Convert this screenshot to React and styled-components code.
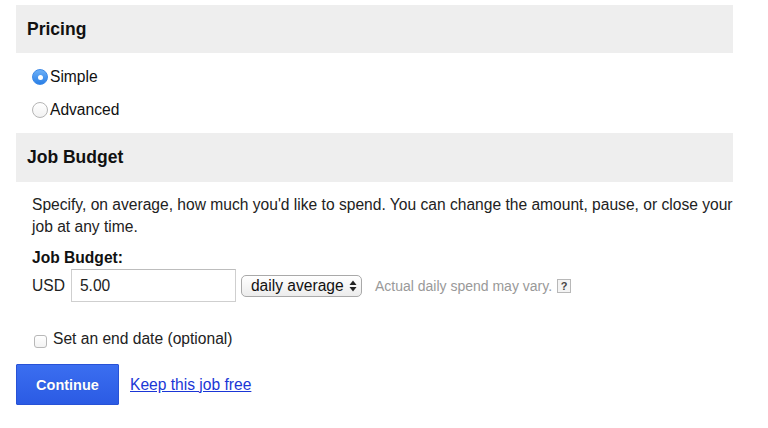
import React from "react";
import styled, { createGlobalStyle } from "styled-components";

const Global = createGlobalStyle`
  html, body { margin: 0; padding: 0; background: #fff; }
  body { font-family: "Liberation Sans", Arial, sans-serif; color: #222; }
`;

const Page = styled.div`
  width: 717px;
  margin-left: 16px;
  padding-top: 5px;
`;

const SectionHeader = styled.div`
  background: #eeeeee;
  height: ${(p) => p.h}px;
  display: flex;
  align-items: center;
  padding-left: 11px;
  font-size: 17.5px;
  font-weight: bold;
  color: #111;
`;

const RadioList = styled.div`
  display: flex;
  flex-direction: column;
  gap: 15px;
  padding: 15px 0 14px 16px;
`;

const RadioRow = styled.label`
  display: flex;
  align-items: center;
  height: 18px;
  font-size: 15.6px;
  color: #111;
`;

const RadioDot = styled.span`
  width: 16px;
  height: 16px;
  border-radius: 50%;
  box-sizing: border-box;
  margin-right: 2px;
  display: flex;
  align-items: center;
  justify-content: center;
  background: ${(p) => (p.on ? "linear-gradient(#6cb0f8, #2a7fe6)" : "linear-gradient(#fff, #f2f2f2)")};
  border: 1px solid ${(p) => (p.on ? "#3d8ae8" : "#b5b5b5")};
  &::after {
    content: "";
    display: ${(p) => (p.on ? "block" : "none")};
    width: 5px;
    height: 5px;
    border-radius: 50%;
    background: #fff;
  }
`;

const Body = styled.div`
  padding: 12px 0 0 16px;
`;

const Desc = styled.p`
  margin: 0;
  font-size: 15.6px;
  line-height: 22px;
  color: #222;
`;

const FieldLabel = styled.div`
  margin-top: 10px;
  font-size: 15.6px;
  font-weight: bold;
  color: #111;
  line-height: 20px;
`;

const BudgetRow = styled.div`
  display: flex;
  align-items: center;
  margin-top: 1px;
  height: 33px;
`;

const Currency = styled.span`
  font-size: 15.6px;
  color: #222;
  margin-right: 6px;
`;

const AmountInput = styled.div`
  width: 165px;
  height: 33px;
  box-sizing: border-box;
  border: 1px solid #cfcfcf;
  border-top-color: #bdbdbd;
  display: flex;
  align-items: center;
  padding-left: 8px;
  font-size: 15.6px;
  color: #222;
`;

const Select = styled.div`
  margin-left: 5px;
  width: 121px;
  height: 22px;
  box-sizing: border-box;
  border: 1px solid #a9a9a9;
  border-radius: 5px;
  background: linear-gradient(#ffffff, #ececec);
  display: flex;
  align-items: center;
  justify-content: space-between;
  padding: 0 4px 0 9px;
  font-size: 15.6px;
  color: #111;
`;

const Hint = styled.span`
  margin-left: 13px;
  font-size: 14px;
  color: #999;
`;

const HelpBox = styled.span`
  margin-left: 5px;
  width: 14px;
  height: 14px;
  box-sizing: border-box;
  border: 1px solid #b8b8b8;
  background: #f4f4f4;
  display: inline-flex;
  align-items: center;
  justify-content: center;
  font-size: 11px;
  font-weight: bold;
  color: #444;
`;

const CheckRow = styled.label`
  display: flex;
  align-items: center;
  margin-top: 28px;
  font-size: 15.6px;
  color: #222;
  padding-left: 2px;
`;

const CheckBox = styled.span`
  width: 13px;
  height: 13px;
  box-sizing: border-box;
  border: 1px solid #b8b8b8;
  border-radius: 3px;
  background: linear-gradient(#fff, #f3f3f3);
  margin-right: 6px;
  margin-top: 4px;
`;

const Actions = styled.div`
  display: flex;
  align-items: center;
  margin-top: 16px;
  gap: 11px;
`;

const ContinueButton = styled.button`
  width: 103px;
  height: 41px;
  border: 1px solid #2852d6;
  border-radius: 1px;
  background: linear-gradient(#3b6ef0, #2b5be4);
  color: #fff;
  font-family: "Liberation Sans", Arial, sans-serif;
  font-size: 14.5px;
  font-weight: bold;
  text-shadow: 0 0 1px rgba(0, 0, 0, 0.2);
  padding: 0;
`;

const Link = styled.a`
  font-size: 15.6px;
  color: #1a36d6;
  text-decoration: underline;
`;

function SortArrows() {
  return (
    <svg width="8" height="12" viewBox="0 0 8 12">
      <path d="M4 0.5 L7.5 5 L0.5 5 Z" fill="#222" />
      <path d="M4 11.5 L7.5 7 L0.5 7 Z" fill="#222" />
    </svg>
  );
}

export default function App() {
  return (
    <>
      <Global />
      <Page>
        <SectionHeader h={48}>Pricing</SectionHeader>
        <RadioList>
          <RadioRow>
            <RadioDot on />
            Simple
          </RadioRow>
          <RadioRow>
            <RadioDot />
            Advanced
          </RadioRow>
        </RadioList>
        <SectionHeader h={49}>Job Budget</SectionHeader>
        <Body>
          <Desc>
            Specify, on average, how much you'd like to spend. You can change the amount, pause, or close your
            job at any time.
          </Desc>
          <FieldLabel>Job Budget:</FieldLabel>
          <BudgetRow>
            <Currency>USD</Currency>
            <AmountInput>5.00</AmountInput>
            <Select>
              daily average
              <SortArrows />
            </Select>
            <Hint>Actual daily spend may vary.</Hint>
            <HelpBox>?</HelpBox>
          </BudgetRow>
          <CheckRow>
            <CheckBox />
            Set an end date (optional)
          </CheckRow>
        </Body>
        <Actions>
          <ContinueButton>Continue</ContinueButton>
          <Link href="#">Keep this job free</Link>
        </Actions>
      </Page>
    </>
  );
}
